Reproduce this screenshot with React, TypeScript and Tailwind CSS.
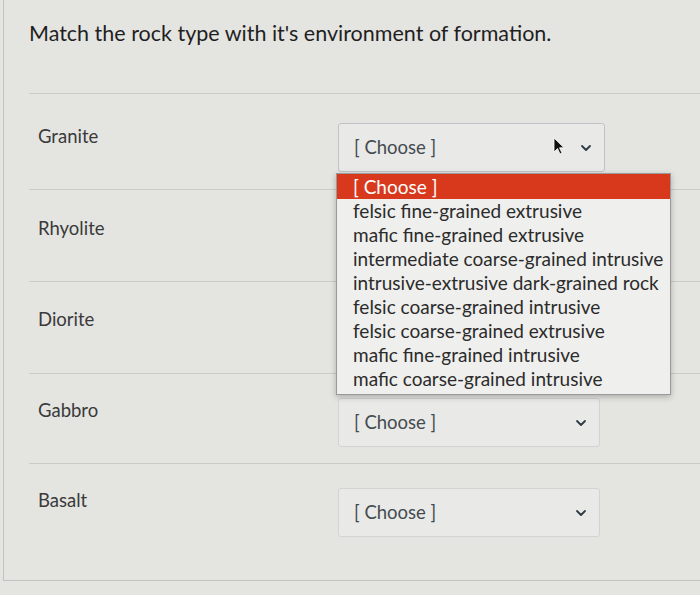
import React from 'react'

const ROWS = [
  { label: 'Granite', h: 'h-[96px]', labelPt: 'pt-[29px]', selPt: 'pt-[29px]' },
  { label: 'Rhyolite', h: 'h-[92px]', labelPt: 'pt-[25px]', selPt: 'pt-[28px]' },
  { label: 'Diorite', h: 'h-[92px]', labelPt: 'pt-[24px]', selPt: 'pt-[27px]' },
  { label: 'Gabbro', h: 'h-[90px]', labelPt: 'pt-[23px]', selPt: 'pt-[24px]' },
  { label: 'Basalt', h: 'h-[117px]', labelPt: 'pt-[23px]', selPt: 'pt-[24px]' },
]

const OPTIONS = [
  'felsic fine-grained extrusive',
  'mafic fine-grained extrusive',
  'intermediate coarse-grained intrusive',
  'intrusive-extrusive dark-grained rock',
  'felsic coarse-grained intrusive',
  'felsic coarse-grained extrusive',
  'mafic fine-grained intrusive',
  'mafic coarse-grained intrusive',
]

function Chevron() {
  return (
    <svg width="12" height="8" viewBox="0 0 12 8" fill="none">
      <path d="M2 2l4 4 4-4" stroke="#2d3b45" strokeWidth="1.8" strokeLinecap="round" strokeLinejoin="round" />
    </svg>
  )
}

function Select({ first }: { first: boolean }) {
  return (
    <div
      className={`flex h-[49px] items-center justify-between rounded-[3px] border bg-[#e9e9e7] pl-[15px] pr-[12px] ${
        first ? 'w-[267px] border-[#bfc3c6]' : 'w-[262px] border-[#d2d4d4]'
      }`}
    >
      <span className="text-[18.5px] text-[#444b50]">[ Choose ]</span>
      <Chevron />
    </div>
  )
}

export default function App() {
  return (
    <div
      className="relative h-[595px] w-[700px] overflow-hidden bg-[#e4e4e1]"
      style={{ fontFamily: 'Lato, "Open Sans", sans-serif' }}
    >
      <div className="ml-[3px] h-[581px] border-b border-l border-[#c2c2c0]">
        <h1 className="pl-[25px] pt-[20px] text-[21.5px] leading-[26px] text-[#1f1f1f]">
          Match the rock type with it's environment of formation.
        </h1>
        <div className="ml-[25px] mt-[47px]">
          {ROWS.map((r, i) => (
            <div key={r.label} className={`flex border-t border-[#cbcbc8] ${r.h}`}>
              <div className={`w-[309px] pl-[9px] text-[18.5px] text-[#3a3a3a] ${r.labelPt}`}>{r.label}</div>
              <div className={r.selPt}>
                <Select first={i === 0} />
              </div>
            </div>
          ))}
        </div>
      </div>

      {/* open dropdown list */}
      <div className="absolute left-[336px] top-[173px] flex w-[335px] flex-col border border-[#9a9a9a] bg-[#efefed] pb-[3px] shadow-[0_2px_6px_rgba(0,0,0,0.25)]">
        <div className="h-[25px] bg-[#d8391d] pl-[16px] text-[19px] leading-[25px] text-white">[ Choose ]</div>
        {OPTIONS.map((o) => (
          <div key={o} className="h-[24px] whitespace-nowrap pl-[16px] text-[19px] leading-[24px] text-[#2b2b2b]">
            {o}
          </div>
        ))}
      </div>

      {/* mouse cursor */}
      <svg className="absolute left-[553px] top-[137px]" width="12" height="18" viewBox="0 0 12 18">
        <path d="M1 1v14l3.5-3.5 2.5 5.5 2-1-2.5-5.2H11z" fill="#111" stroke="#fff" strokeWidth="0.8" />
      </svg>
    </div>
  )
}
